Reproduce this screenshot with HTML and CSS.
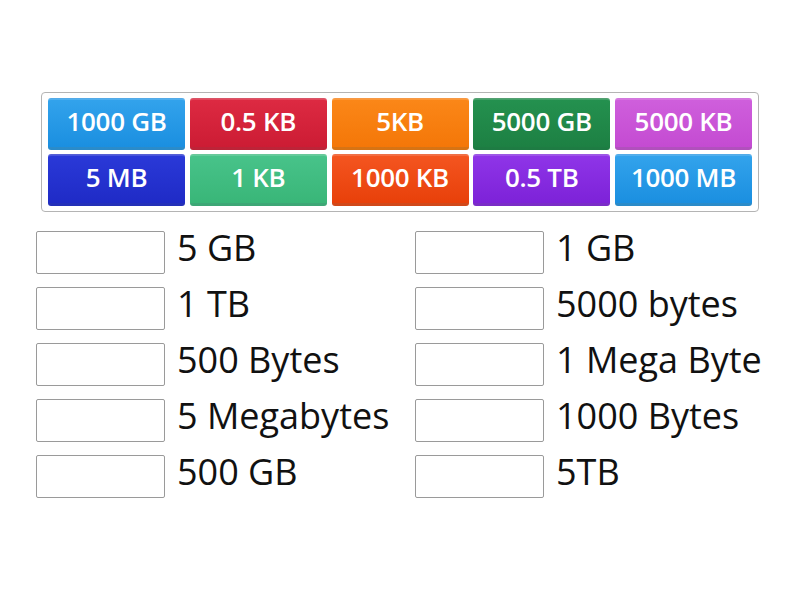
FILE: index.html
```html
<!DOCTYPE html>
<html>
<head>
<meta charset="utf-8">
<link rel="stylesheet" href="styles.css">
</head>
<body>
<div class="page">
  <div class="bank">
    <div class="tile c-blue">1000 GB</div>
    <div class="tile c-red">0.5 KB</div>
    <div class="tile c-orange">5KB</div>
    <div class="tile c-dgreen">5000 GB</div>
    <div class="tile c-magenta">5000 KB</div>
    <div class="tile c-navy">5 MB</div>
    <div class="tile c-green">1 KB</div>
    <div class="tile c-redorange">1000 KB</div>
    <div class="tile c-purple">0.5 TB</div>
    <div class="tile c-blue2">1000 MB</div>
  </div>
  <div class="targets">
    <div class="col">
      <div class="row"><div class="slot"></div><div class="label">5 GB</div></div>
      <div class="row"><div class="slot"></div><div class="label">1 TB</div></div>
      <div class="row"><div class="slot"></div><div class="label">500 Bytes</div></div>
      <div class="row"><div class="slot"></div><div class="label">5 Megabytes</div></div>
      <div class="row"><div class="slot"></div><div class="label">500 GB</div></div>
    </div>
    <div class="col">
      <div class="row"><div class="slot"></div><div class="label">1 GB</div></div>
      <div class="row"><div class="slot"></div><div class="label">5000 bytes</div></div>
      <div class="row"><div class="slot"></div><div class="label">1 Mega Byte</div></div>
      <div class="row"><div class="slot"></div><div class="label">1000 Bytes</div></div>
      <div class="row"><div class="slot"></div><div class="label">5TB</div></div>
    </div>
  </div>
</div>
</body>
</html>
```

FILE: styles.css
```css
html, body {
  margin: 0;
  padding: 0;
  background: #ffffff;
}
body {
  font-family: "Open Sans", "Liberation Sans", sans-serif;
  width: 800px;
  height: 600px;
  overflow: hidden;
}
.page {
  padding: 92px 0 0 41px;
}
.bank {
  box-sizing: border-box;
  width: 718px;
  height: 120px;
  border: 1px solid #b4b4b4;
  border-radius: 4px;
  padding: 5px 5px 4px 6px;
  display: grid;
  grid-template-columns: repeat(5, 137px);
  grid-template-rows: 52px 52px;
  column-gap: 4.75px;
  row-gap: 4px;
}
.tile {
  box-sizing: border-box;
  border-radius: 3px;
  color: #ffffff;
  font-weight: 600;
  font-size: 26px;
  display: flex;
  align-items: center;
  justify-content: center;
  padding-bottom: 4px;
  border-top: 1px solid rgba(255,255,255,0.25);
  border-bottom: 3px solid rgba(0,0,0,0.14);
  box-shadow: inset 0 1px 0 rgba(255,255,255,0.15);
  letter-spacing: -0.3px;
  white-space: nowrap;
}
.c-blue { background: linear-gradient(#33a3ec, #1b8fe0); }
.c-red { background: linear-gradient(#dd2a42, #cc1c34); }
.c-orange { background: linear-gradient(#fb8718, #f47708); }
.c-dgreen { background: linear-gradient(#24914f, #1d8043); }
.c-magenta { background: linear-gradient(#cf5fdc, #c44bd2); }
.c-navy { background: linear-gradient(#2a39d8, #1f2bc6); }
.c-green { background: linear-gradient(#48c38a, #39b678); }
.c-redorange { background: linear-gradient(#f45520, #e8400a); }
.c-purple { background: linear-gradient(#8f35e8, #7d22d8); }
.c-blue2 { background: linear-gradient(#33a3ec, #1b8fe0); }

.targets {
  display: flex;
  margin-top: 19px;
  margin-left: -5px;
}
.col {
  width: 379px;
  display: flex;
  flex-direction: column;
  gap: 13px;
}
.row {
  display: flex;
  align-items: flex-start;
  height: 43px;
}
.slot {
  box-sizing: border-box;
  width: 129px;
  height: 43px;
  border: 1px solid #9a9a9a;
  border-radius: 2px;
  background: #ffffff;
  flex: none;
}
.label {
  margin-left: 12px;
  font-size: 36px;
  line-height: 34px;
  color: #111111;
  white-space: nowrap;
}
```
